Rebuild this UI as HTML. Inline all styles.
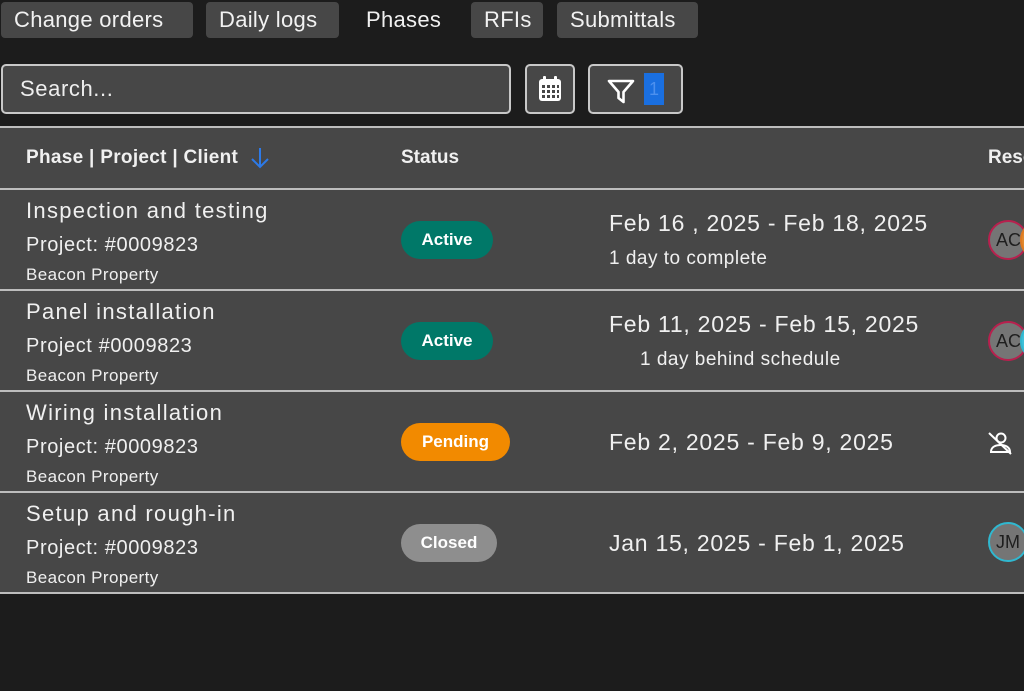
<!DOCTYPE html>
<html><head><meta charset="utf-8"><style>
*{margin:0;padding:0;box-sizing:border-box}
body{width:1024px;height:691px;background:#1c1c1c;font-family:"Liberation Sans",sans-serif;color:#f0f0f0;position:relative;overflow:hidden}
.a{position:absolute;white-space:nowrap}
.tab{position:absolute;top:2px;height:36px;background:#474747;border-radius:4px;font-size:22px;line-height:36px;padding:0 0 0 13px;color:#f2f2f2;white-space:nowrap;letter-spacing:0.3px}
.pill{position:absolute;height:38px;border-radius:19px;font-size:17px;font-weight:bold;line-height:38px;text-align:center;color:#fff}
.hl{position:absolute;left:0;width:1024px;height:2px;background:#bdbdbd}
.t1{font-size:22px;letter-spacing:1.3px}.t2{font-size:20px;letter-spacing:0.6px}.t3{font-size:17px;letter-spacing:0.4px}
.d1{font-size:23px;letter-spacing:0.75px}.d2{font-size:19px;letter-spacing:0.5px}
.av{position:absolute;width:40px;height:40px;border-radius:50%;background:#757575;border:2px solid #b8204e;font-size:18px;color:#1e1e1e;line-height:36px;text-indent:6px;overflow:hidden;white-space:nowrap}
</style></head><body>
<div class="tab" style="left:1px;width:192px">Change orders</div>
<div class="tab" style="left:206px;width:133px">Daily logs</div>
<div class="a" style="left:366px;top:2px;font-size:22px;line-height:36px;letter-spacing:0.3px">Phases</div>
<div class="tab" style="left:471px;width:72px">RFIs</div>
<div class="tab" style="left:557px;width:141px">Submittals</div>

<div class="a" style="left:1px;top:64px;width:510px;height:50px;background:#474747;border:2px solid #c8c8c8;border-radius:5px;font-size:22px;line-height:46px;padding-left:17px;color:#eee;letter-spacing:0.6px">Search...</div>
<div class="a" style="left:525px;top:64px;width:50px;height:50px;background:#474747;border:2px solid #c8c8c8;border-radius:5px">
<svg width="46" height="46" viewBox="0 0 46 46" style="position:absolute;left:0;top:0"><rect x="12" y="13" width="22" height="22" rx="3" fill="#fff"/><rect x="16" y="10" width="3" height="5" rx="1" fill="#fff"/><rect x="27" y="10" width="3" height="5" rx="1" fill="#fff"/><g fill="#474747"><rect x="15" y="19" width="3" height="3"/><rect x="20" y="19" width="3" height="3"/><rect x="25" y="19" width="3" height="3"/><rect x="30" y="19" width="2" height="3"/><rect x="15" y="24" width="3" height="3"/><rect x="20" y="24" width="3" height="3"/><rect x="25" y="24" width="3" height="3"/><rect x="30" y="24" width="2" height="3"/><rect x="15" y="29" width="3" height="3"/><rect x="20" y="29" width="3" height="3"/><rect x="25" y="29" width="3" height="3"/><rect x="30" y="29" width="2" height="3"/></g></svg></div>
<div class="a" style="left:588px;top:64px;width:95px;height:50px;background:#474747;border:2px solid #c8c8c8;border-radius:5px">
<svg width="30" height="30" viewBox="0 0 30 30" style="position:absolute;left:16px;top:10px"><path d="M3 5H27L17.5 16V26L12.5 22V16Z" fill="none" stroke="#fff" stroke-width="2.6" stroke-linejoin="round"/></svg>
<div class="a" style="left:54px;top:7px;width:20px;height:32px;background:#1a6fe0;font-size:18px;line-height:32px;text-align:center;color:#4d90ee">1</div></div>

<div class="a" style="left:0;top:126px;width:1024px;height:467px;background:#474747"></div>
<div class="hl" style="top:126px"></div>
<div class="a" style="left:26px;top:146px;font-size:19px;font-weight:bold;line-height:24px;letter-spacing:0.3px">Phase | Project | Client</div>
<svg class="a" style="left:249px;top:146px" width="22" height="24" viewBox="0 0 22 24"><path d="M11 2V21M3 13L11 21L19 13" fill="none" stroke="#2d7ae8" stroke-width="2"/></svg>
<div class="a" style="left:401px;top:146px;font-size:19px;font-weight:bold;line-height:24px">Status</div>
<div class="a" style="left:988px;top:146px;font-size:19px;font-weight:bold;line-height:24px">Reso</div>
<div class="hl" style="top:188px"></div>

<!-- row 1 -->
<div class="a t1" style="left:26px;top:198px">Inspection and testing</div>
<div class="a t2" style="left:26px;top:234px">Project: #0009823</div>
<div class="a t3" style="left:26px;top:265px">Beacon Property</div>
<div class="pill" style="left:401px;top:221px;width:92px;background:#007868">Active</div>
<div class="a d1" style="left:609px;top:210px">Feb 16 , 2025 - Feb 18, 2025</div>
<div class="a d2" style="left:609px;top:248px">1 day to complete</div>
<div class="av" style="left:988px;top:220px">AC</div>
<div class="av" style="left:1020px;top:220px;border-color:#e07a20;background:#e08a30"></div>
<div class="hl" style="top:289px"></div>

<!-- row 2 -->
<div class="a t1" style="left:26px;top:299px">Panel installation</div>
<div class="a t2" style="left:26px;top:335px">Project #0009823</div>
<div class="a t3" style="left:26px;top:366px">Beacon Property</div>
<div class="pill" style="left:401px;top:322px;width:92px;background:#007868">Active</div>
<div class="a d1" style="left:609px;top:311px">Feb 11, 2025 - Feb 15, 2025</div>
<div class="a d2" style="left:640px;top:349px">1 day behind schedule</div>
<div class="av" style="left:988px;top:321px">AC</div>
<div class="av" style="left:1020px;top:321px;border-color:#30b8d0;background:#40c0d8"></div>
<div class="hl" style="top:390px"></div>

<!-- row 3 -->
<div class="a t1" style="left:26px;top:400px">Wiring installation</div>
<div class="a t2" style="left:26px;top:436px">Project: #0009823</div>
<div class="a t3" style="left:26px;top:467px">Beacon Property</div>
<div class="pill" style="left:401px;top:423px;width:109px;background:#f28a00">Pending</div>
<div class="a d1" style="left:609px;top:429px">Feb 2, 2025 - Feb 9, 2025</div>
<svg class="a" style="left:986px;top:430px" width="28" height="26" viewBox="0 0 28 26"><circle cx="15" cy="8" r="4.5" fill="none" stroke="#fff" stroke-width="2"/><path d="M5 22C5 16 11 15 15 15C19 15 24 17 24 22Z" fill="none" stroke="#fff" stroke-width="2"/><path d="M3 3L25 24" stroke="#fff" stroke-width="2"/></svg>
<div class="hl" style="top:491px"></div>

<!-- row 4 -->
<div class="a t1" style="left:26px;top:501px">Setup and rough-in</div>
<div class="a t2" style="left:26px;top:537px">Project: #0009823</div>
<div class="a t3" style="left:26px;top:568px">Beacon Property</div>
<div class="pill" style="left:401px;top:524px;width:96px;background:#8e8e8e">Closed</div>
<div class="a d1" style="left:609px;top:530px">Jan 15, 2025 - Feb 1, 2025</div>
<div class="av" style="left:988px;top:522px;border-color:#30b8d0">JM</div>
<div class="hl" style="top:592px"></div>
</body></html>
